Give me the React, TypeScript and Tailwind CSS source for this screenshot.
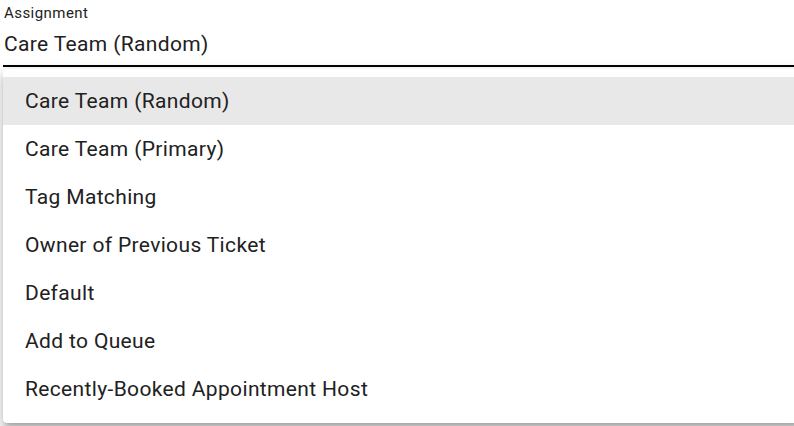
import React from 'react';

const options = [
  'Care Team (Random)',
  'Care Team (Primary)',
  'Tag Matching',
  'Owner of Previous Ticket',
  'Default',
  'Add to Queue',
  'Recently-Booked Appointment Host',
];

const App = () => {
  const selected = options[0];

  return (
    <div className="relative w-[794px] h-[426px] overflow-hidden bg-white font-['Roboto',sans-serif] text-[#212121]">
      <div className="pl-[4px] pt-[4px]">
        <div className="text-[15px] leading-[18px] tracking-[0.45px] text-[#222]">Assignment</div>
        <div className="text-[21px] leading-[28px] mt-[8px] tracking-[0.35px]">{selected}</div>
      </div>
      <div className="ml-[3px] mt-[7px] h-[2px] bg-black" />

      <div className="absolute left-[3px] top-[69px] w-[800px] rounded-[4px] bg-white pt-[8px] pb-[10px] shadow-[0_5px_5px_-3px_rgba(0,0,0,0.2),0_8px_10px_1px_rgba(0,0,0,0.14),0_3px_14px_2px_rgba(0,0,0,0.12)]">
        {options.map((o) => (
          <div
            key={o}
            className={`h-[48px] flex items-center pl-[22px] pt-[2px] text-[21px] tracking-[0.35px] ${o === selected ? 'bg-[#e8e8e8]' : ''}`}
          >
            {o}
          </div>
        ))}
      </div>
    </div>
  );
};

export default App;
